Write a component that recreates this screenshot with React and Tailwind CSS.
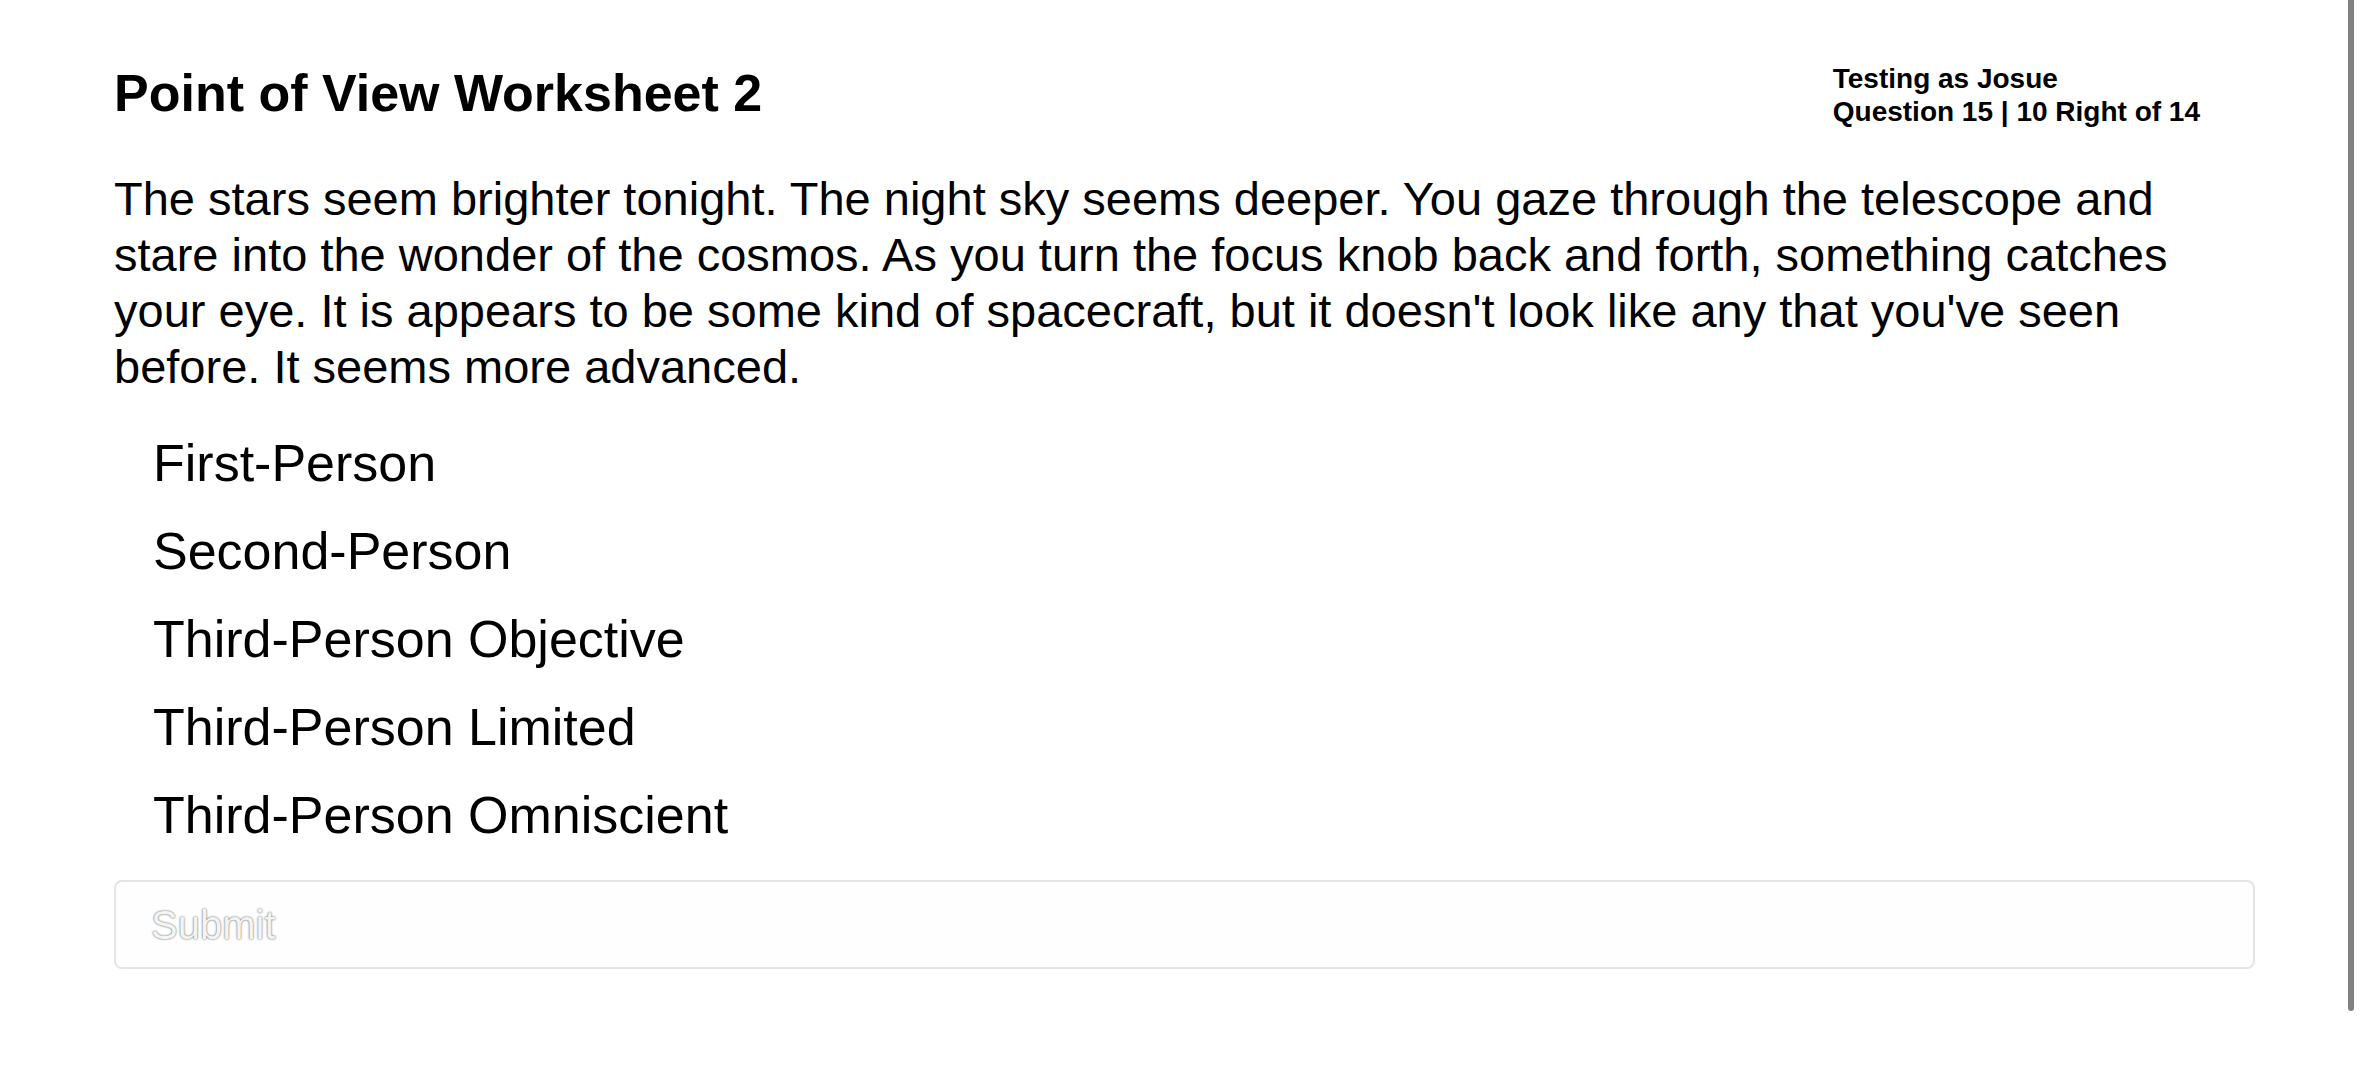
import { useState } from "react";

const choices = [
  "First-Person",
  "Second-Person",
  "Third-Person Objective",
  "Third-Person Limited",
  "Third-Person Omniscient",
];

export default function App() {
  const [picked, setPicked] = useState(null);

  return (
    <div className="min-h-screen bg-white text-black font-['Liberation_Sans',Arial,sans-serif]">
      <div className="ml-[114px] w-[2141px] pt-[60px]">
        <header className="flex h-[68px] items-start justify-between">
          <h1 className="mt-[3px] text-[52px] font-bold leading-[60px]">Point of View Worksheet 2</h1>
          <div className="mr-[55px] mt-[2px] text-[28px] font-bold leading-[33px]">
            <div>Testing as Josue</div>
            <div>Question 15 | 10 Right of 14</div>
          </div>
        </header>

        <p className="mt-[43px] text-[47px] leading-[56px]">
          The stars seem brighter tonight. The night sky seems deeper. You gaze through the telescope and stare into the wonder of the cosmos. As you turn the focus knob back and forth, something catches your eye. It is appears to be some kind of spacecraft, but it doesn't look like any that you've seen before. It seems more advanced.
        </p>

        <ul className="mt-[24px] pl-[39px]">
          {choices.map((c) => (
            <li
              key={c}
              onClick={() => setPicked(c)}
              className={`cursor-pointer text-[52px] leading-[88px] ${picked === c ? "text-blue-700" : ""}`}
            >
              {c}
            </li>
          ))}
        </ul>

        <button
          disabled={!picked}
          className="mt-[21px] flex h-[89px] w-full items-center rounded-[8px] border-2 border-[#e4e4e4] bg-[#fefefe] pl-[35px] text-left text-[40px] text-[#f4f4f4] [text-shadow:0_0_2px_rgba(0,0,0,0.75)]"
        >
          Submit
        </button>
      </div>

      <div className="fixed right-[6px] top-0 h-[1011px] w-[6px] rounded-b-full bg-[#808080]" />
    </div>
  );
}
